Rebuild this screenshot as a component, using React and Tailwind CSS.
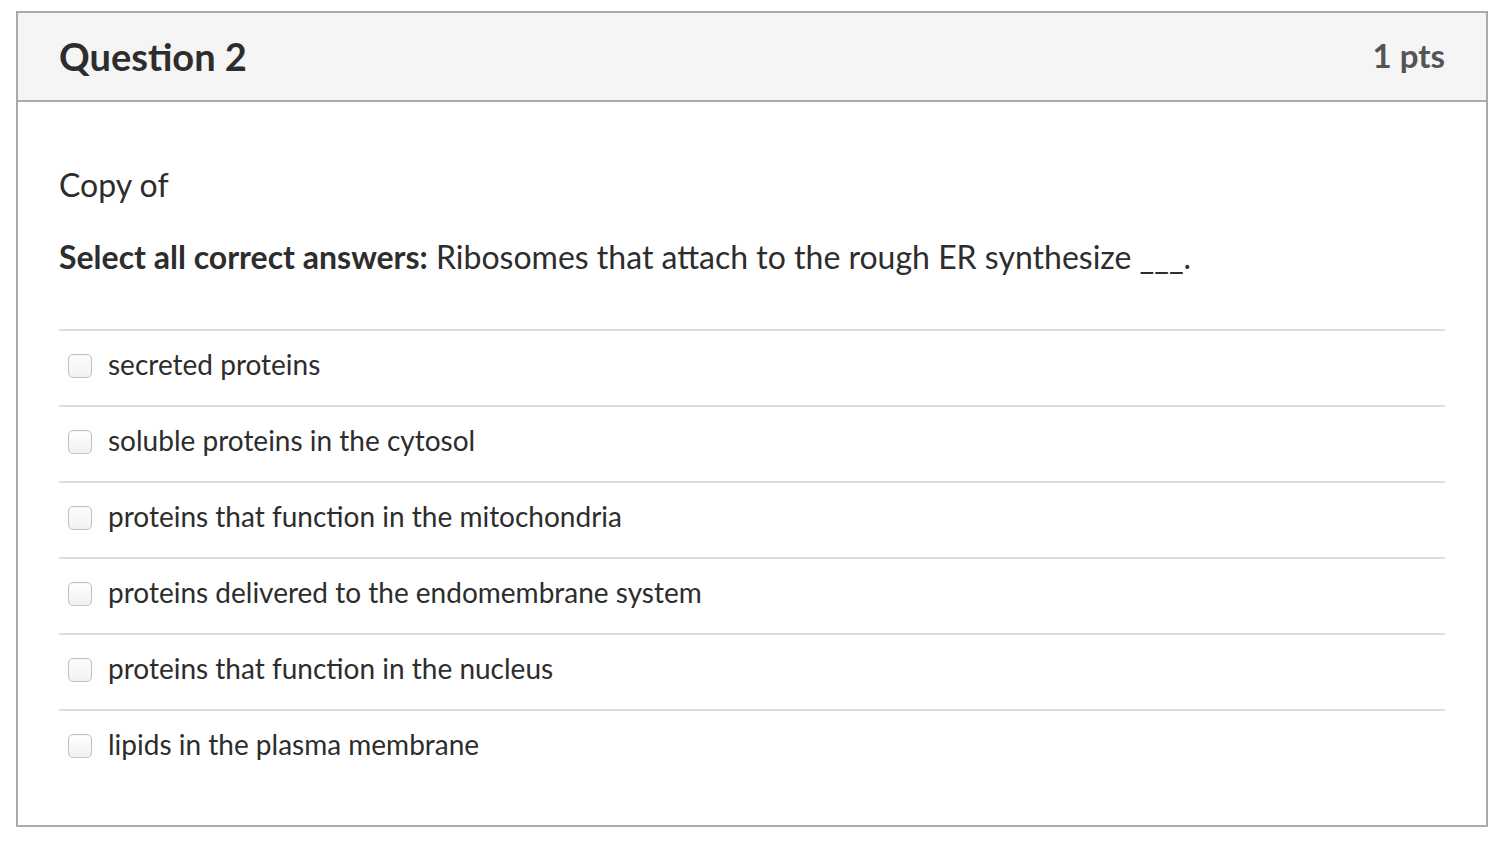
import React from "react";

const answers = [
  "secreted proteins",
  "soluble proteins in the cytosol",
  "proteins that function in the mitochondria",
  "proteins delivered to the endomembrane system",
  "proteins that function in the nucleus",
  "lipids in the plasma membrane",
];

export default function App() {
  return (
    <div
      className="bg-white w-[1496px] h-[848px] pt-[11px] pl-[16px]"
      style={{ fontFamily: "Lato, 'Open Sans', sans-serif" }}
    >
      <div className="w-[1472px] border-2 border-[#aaaaaa] bg-white">
        <div className="h-[89px] bg-[#f5f5f5] border-b-2 border-[#aaaaaa] flex items-center justify-between px-[41px]">
          <div className="text-[38px] font-bold text-[#2d2d2d] leading-none mt-[-2px]">Question 2</div>
          <div className="text-[33px] font-bold text-[#555555] leading-none mt-[-2px]">1 pts</div>
        </div>
        <div className="px-[41px] pt-[65px] pb-[40px]">
          <div className="text-[32px] text-[#2d2d2d] leading-[36px]">Copy of</div>
          <div className="mt-[36px] text-[32px] text-[#2d2d2d] leading-[36px]">
            <span className="font-bold">Select all correct answers:</span> Ribosomes that attach to the rough ER synthesize ___.
          </div>
          <div className="mt-[54px]">
            {answers.map((a, i) => (
              <div
                key={i}
                className="h-[76px] flex items-center border-t-2 border-[#dddddd] pb-[4px]"
              >
                <div className="ml-[9px] w-[24px] h-[24px] rounded-[5px] border border-[#c2c2c2] bg-gradient-to-b from-white to-[#f0f0f0] shadow-[inset_0_1px_1px_rgba(0,0,0,0.05)]" />
                <div className="ml-[16px] mb-[4px] text-[28px] text-[#2d2d2d] leading-none">{a}</div>
              </div>
            ))}
          </div>
        </div>
      </div>
    </div>
  );
}
